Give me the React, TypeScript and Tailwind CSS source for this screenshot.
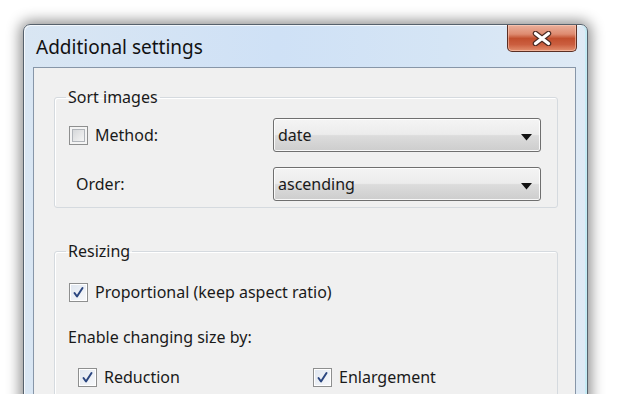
import React from 'react';

const font = { fontFamily: '"Noto Sans", "Open Sans", sans-serif' };

function CheckBox({ checked }: { checked?: boolean }) {
  if (!checked) {
    return (
      <span className="flex h-[19px] w-[19px] shrink-0 items-center justify-center border border-[#8e8f8f] bg-[#f4f4f4]">
        <span className="h-[13px] w-[13px] border border-[#b0b4b9] bg-gradient-to-br from-[#d6d8da] to-[#f5f5f5]" />
      </span>
    );
  }
  return (
    <span className="flex h-[19px] w-[19px] shrink-0 items-center justify-center border border-[#8e8f8f] bg-gradient-to-br from-[#dfe6f0] to-[#f8f9fb] shadow-[inset_0_0_0_1px_#ffffff]">
      <svg width="13" height="13" viewBox="0 0 13 13">
        <path d="M2.5 7 L5 10.5 L10.5 2" fill="none" stroke="#2a4680" strokeWidth="2" strokeLinecap="round" strokeLinejoin="round" />
      </svg>
    </span>
  );
}

function Dropdown({ value }: { value: string }) {
  return (
    <div className="flex h-[34px] w-[268px] items-center justify-between rounded-[3px] border border-[#6f6f6f] bg-[linear-gradient(#f4f4f4_0%,#ececec_48%,#dcdcdc_52%,#cdcdcd_100%)] pl-[4px] pr-[8px] shadow-[inset_0_0_0_1px_rgba(255,255,255,0.85)]">
      <span className="text-[16px] leading-[20px] text-[#1a1a1a]">{value}</span>
      <svg width="11" height="7" viewBox="0 0 11 7" className="mt-[5px]">
        <path d="M0 0 H11 L5.5 6.5 Z" fill="#111" />
      </svg>
    </div>
  );
}

function Group({ title, children, className }: { title: string; children: React.ReactNode; className?: string }) {
  return (
    <fieldset className={`rounded-[3px] border border-[#d5dadf] shadow-[inset_1px_1px_0_#ffffff] ${className ?? ''}`}>
      <legend className="ml-[-3px] px-[2px] text-[16px] leading-[20px] text-[#1a1a1a]">{title}</legend>
      {children}
    </fieldset>
  );
}

export default function App() {
  return (
    <div className="h-[394px] w-[618px] overflow-hidden bg-white pl-[23px] pt-[24px] text-[#1a1a1a]" style={font}>
      {/* Window */}
      <div className="w-[565px] h-[420px] rounded-t-[7px] border border-[#56616c] bg-[linear-gradient(90deg,#d9e6f3,#cfe1f6_45%,#d5e5f5_75%,#dfeaf5)] px-[9px] pr-[11px] shadow-[0_0_14px_3px_rgba(0,0,0,0.45),inset_1px_1px_0_rgba(255,255,255,0.7),inset_-2px_0_0_rgba(190,235,245,0.8)]">
        {/* Title bar */}
        <div className="flex h-[42px] items-start justify-between">
          <span className="self-center pl-[3px] pt-[1px] text-[19px] leading-[22px] text-[#111]">Additional settings</span>
          <div className="mr-[-1px] flex h-[27px] w-[70px] items-center justify-center rounded-b-[5px] border border-t-0 border-[#5a2f24] bg-[linear-gradient(#eab09c_0%,#de8b70_35%,#c24f2e_52%,#cb5e3f_75%,#e3906f_100%)] shadow-[inset_0_0_0_1px_rgba(255,210,190,0.55)]">
            <svg width="20" height="15" viewBox="0 0 20 15">
              <path d="M3.5 2.5 L16.5 12.5 M16.5 2.5 L3.5 12.5" stroke="#4a2a22" strokeWidth="5.5" strokeLinecap="round" />
              <path d="M3.5 2.5 L16.5 12.5 M16.5 2.5 L3.5 12.5" stroke="#ffffff" strokeWidth="3.2" strokeLinecap="round" />
            </svg>
          </div>
        </div>

        {/* Content */}
        <div className="h-[360px] border border-[#8796a8] bg-[#f0f0f0] pl-[20px] pr-[17px] pt-[19px]">
          <Group title="Sort images" className="pb-[6px] pl-[14px] pr-[16px]">
            <div className="grid grid-cols-[1fr_268px] gap-y-[15px] pt-[11px]">
              <div className="flex items-center gap-[7px]">
                <CheckBox />
                <span className="text-[16px] leading-[20px]">Method:</span>
              </div>
              <Dropdown value="date" />
              <div className="flex items-center pl-[7px]">
                <span className="text-[16px] leading-[20px]">Order:</span>
              </div>
              <Dropdown value="ascending" />
            </div>
          </Group>

          <Group title="Resizing" className="mt-[33px] h-[200px] pl-[14px] pr-[16px]">
            <div className="flex items-center gap-[7px] pt-[21px]">
              <CheckBox checked />
              <span className="text-[16px] leading-[20px]">Proportional (keep aspect ratio)</span>
            </div>
            <div className="pt-[25px] text-[16px] leading-[20px] -ml-[1px]">Enable changing size by:</div>
            <div className="grid grid-cols-[235px_1fr] pl-[9px] pt-[20px]">
              <div className="flex items-center gap-[7px]">
                <CheckBox checked />
                <span className="text-[16px] leading-[20px]">Reduction</span>
              </div>
              <div className="flex items-center gap-[7px]">
                <CheckBox checked />
                <span className="text-[16px] leading-[20px]">Enlargement</span>
              </div>
            </div>
          </Group>
        </div>
      </div>
    </div>
  );
}
